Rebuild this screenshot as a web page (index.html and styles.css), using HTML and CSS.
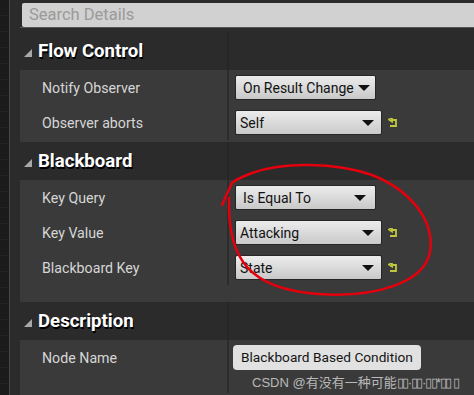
FILE: index.html
```html
<!DOCTYPE html>
<html lang="en">
<head>
  <meta charset="UTF-8" />
  <title>Details - Blackboard Decorator</title>
  <link rel="stylesheet" href="styles.css">
</head>
<body>

  <div class="editor">
    <div class="gutter"></div>

    <div class="details">
      <div class="search-row">
        <div class="search">Search Details</div>
      </div>

      <section class="category">
        <div class="cat-head">
          <div class="cat-title"><span class="fold"></span>Flow Control</div>
          <div class="cat-fill"></div>
        </div>
        <div class="prop">
          <div class="prop-name">Notify Observer</div>
          <div class="prop-value">
            <div class="combo fit">On Result Change<span class="caret"></span></div>
          </div>
        </div>
        <div class="prop">
          <div class="prop-name">Observer aborts</div>
          <div class="prop-value">
            <div class="combo wide">Self<span class="caret"></span></div>
            <svg class="reset" width="10" height="10" viewBox="0 0 10 10"><path d="M1 1.5 L4 0 L4 3.5 Z M3 2 H8 V8 H2" fill="none" stroke="#bfc83c" stroke-width="1.8"/></svg>
          </div>
        </div>
      </section>

      <section class="category tall">
        <div class="cat-head">
          <div class="cat-title"><span class="fold"></span>Blackboard</div>
          <div class="cat-fill"></div>
        </div>
        <div class="prop">
          <div class="prop-name">Key Query</div>
          <div class="prop-value">
            <div class="combo narrow">Is Equal To<span class="caret"></span></div>
          </div>
        </div>
        <div class="prop">
          <div class="prop-name">Key Value</div>
          <div class="prop-value">
            <div class="combo wide">Attacking<span class="caret"></span></div>
            <svg class="reset" width="10" height="10" viewBox="0 0 10 10"><path d="M1 1.5 L4 0 L4 3.5 Z M3 2 H8 V8 H2" fill="none" stroke="#bfc83c" stroke-width="1.8"/></svg>
          </div>
        </div>
        <div class="prop">
          <div class="prop-name">Blackboard Key</div>
          <div class="prop-value">
            <div class="combo wide">State<span class="caret"></span></div>
            <svg class="reset" width="10" height="10" viewBox="0 0 10 10"><path d="M1 1.5 L4 0 L4 3.5 Z M3 2 H8 V8 H2" fill="none" stroke="#bfc83c" stroke-width="1.8"/></svg>
          </div>
        </div>
      </section>

      <section class="category last">
        <div class="cat-head">
          <div class="cat-title"><span class="fold"></span>Description</div>
          <div class="cat-fill"></div>
        </div>
        <div class="prop">
          <div class="prop-name">Node Name</div>
          <div class="prop-value">
            <div class="textbox">Blackboard Based Condition</div>
          </div>
        </div>
        <div class="prop filler">
          <div class="prop-name"></div>
          <div class="prop-value"></div>
        </div>
      </section>
    </div>
  </div>

  <!-- hand drawn marker over the screenshot -->
  <svg class="scribble" width="474" height="395" viewBox="0 0 474 395">
    <path d="M229 198 C227 262 252 289 318 294 C375 298 424 283 430 252 C435 220 410 190 372 175 C335 162 282 162 252 173 C242 177 236 179 232 183 L222 205" />
  </svg>

  <div class="watermark">CSDN @有没有一种可能<span class="tofu">▯▯·▯▯·▯▯*▯▯ ▯</span></div>

</body>
</html>
```

FILE: styles.css
```css
body {
  margin: 0;
  width: 474px;
  height: 395px;
  overflow: hidden;
  background: #1a1a1a;
  font-family: Roboto, "Liberation Sans", sans-serif;
  position: relative;
}

.editor {
  display: flex;
  height: 395px;
}

.gutter {
  width: 9px;
  background: repeating-linear-gradient(to bottom, #1b1b1b 0, #1b1b1b 15px, #222 15px, #222 16px);
  border-right: 1px solid #474747;
}

.details {
  flex: 1;
  background: #2b2b2b;
  padding-left: 10px;
  display: flex;
  flex-direction: column;
}

.search-row {
  padding: 3px 0 0 2px;
  height: 24px;
  border-bottom: 1px solid #555;
  margin-bottom: 4px;
}

.search {
  height: 24px;
  line-height: 24px;
  background: #d1d1d1;
  border-radius: 2px 0 0 2px;
  padding-left: 7px;
  color: #9a9a9a;
  font-size: 16.5px;
}

.category {
  background: #3a3a3a;
  padding-bottom: 2px;
}

.category.tall {
  padding-bottom: 17px;
}

.category.last {
  flex: 1;
  display: flex;
  flex-direction: column;
}

.cat-head {
  display: grid;
  grid-template-columns: 209px 1fr;
  height: 38px;
  background: #2b2b2b;
}

.cat-title {
  display: flex;
  align-items: center;
  padding-left: 4px;
  border-right: 2px solid #262626;
  color: #fff;
  font-size: 18.6px;
  font-weight: bold;
  text-shadow: 1px 2px 0 #000;
}

.fold {
  width: 0;
  height: 0;
  border-left: 8px solid transparent;
  border-bottom: 8px solid #a9a9a9;
  margin: 4px 6px 0 0;
}

.prop {
  display: grid;
  grid-template-columns: 209px 1fr;
  height: 35px;
}

.prop.filler {
  flex: 1;
}

.prop-name {
  display: flex;
  align-items: center;
  padding-left: 22px;
  border-right: 2px solid #2c2c2c;
  color: #d6d6d6;
  font-size: 14.2px;
}

.prop-value {
  display: flex;
  align-items: center;
  padding-left: 6px;
  gap: 6px;
}

.combo {
  display: flex;
  align-items: center;
  justify-content: space-between;
  box-sizing: border-box;
  height: 25px;
  padding: 0 8px 0 7px;
  background: linear-gradient(to bottom, #ececec, #c9c9c9);
  border: 1px solid #262626;
  border-radius: 2px;
  color: #121212;
  font-size: 14px;
}

.combo.fit {
  gap: 4px;
  padding-right: 5px;
}

.combo.narrow {
  width: 141px;
  padding-right: 9px;
}

.combo.wide {
  width: 147px;
  padding-left: 4px;
  padding-right: 7px;
}

.caret {
  width: 0;
  height: 0;
  border-left: 6px solid transparent;
  border-right: 6px solid transparent;
  border-top: 6px solid #111;
}

.reset {
  flex: none;
}

.textbox {
  height: 25px;
  line-height: 25px;
  padding: 0 8px;
  background: #e1e1e1;
  border-radius: 4px;
  color: #141414;
  font-size: 13.7px;
  margin-left: -2px;
}

.scribble {
  position: absolute;
  left: 0;
  top: 0;
  pointer-events: none;
}

.scribble path {
  fill: none;
  stroke: #e4000d;
  stroke-width: 2.5;
  stroke-linecap: round;
}

.watermark {
  position: absolute;
  left: 252px;
  top: 372px;
  color: rgba(235, 235, 235, 0.72);
  font-family: "Liberation Sans", "Noto Sans CJK SC", sans-serif;
  font-size: 13px;
  white-space: nowrap;
}

.tofu {
  font-size: 13px;
  letter-spacing: -1.4px;
}
```
